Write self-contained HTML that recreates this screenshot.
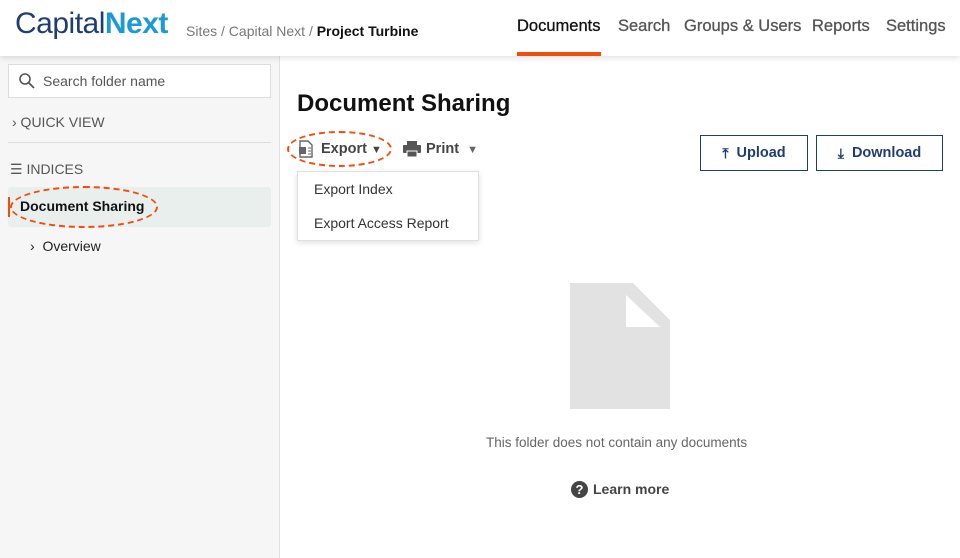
<!DOCTYPE html>
<html><head><meta charset="utf-8"><style>
*{box-sizing:border-box;margin:0;padding:0}
body{width:960px;height:558px;overflow:hidden;background:#fff;font-family:"Liberation Sans",sans-serif;position:relative}
.hdr{position:absolute;left:0;top:0;width:960px;height:56px;background:#fff;box-shadow:0 2px 6px rgba(0,0,0,.12);z-index:2}
.logo{position:absolute;left:15px;top:7px;font-size:30px;color:#1f3d73;letter-spacing:-0.5px}
.logo b{color:#1c9ad6}
.bc{position:absolute;left:186px;top:23px;font-size:14px;color:#777}
.bc b{color:#111}
.nav{position:absolute;top:17px;font-size:16.5px;color:#555;-webkit-text-stroke:0.3px}
.side{position:absolute;left:0;top:56px;width:280px;height:502px;background:#f6f6f6;border-right:1px solid #e2e2e2}
.abs{position:absolute}
.btn{position:absolute;top:135px;height:36px;border:1.5px solid #1f3d73;color:#1f3d73;font-weight:bold;font-size:14.5px;display:flex;align-items:center;justify-content:center;gap:8px}
</style></head><body>
<div class="hdr">
<div class="logo">Capital<b>Next</b></div>
<div class="bc">Sites / Capital Next / <b>Project Turbine</b></div>
<div class="nav" style="left:517px;color:#111">Documents</div>
<div class="abs" style="left:517px;top:52px;width:84px;height:4px;background:#f04e0e"></div>
<div class="nav" style="left:618px">Search</div>
<div class="nav" style="left:684px">Groups &amp; Users</div>
<div class="nav" style="left:812px">Reports</div>
<div class="nav" style="left:886px">Settings</div>
</div>
<div class="side">
<div class="abs" style="left:8px;top:8px;width:263px;height:34px;background:#fff;border:1px solid #ddd"></div>
<svg class="abs" style="left:18px;top:16px" width="18" height="18" viewBox="0 0 18 18"><circle cx="7" cy="7" r="5" fill="none" stroke="#555" stroke-width="1.6"/><path d="M11 11l5 5" stroke="#555" stroke-width="1.8"/></svg>
<div class="abs" style="left:43px;top:17px;font-size:14px;color:#555">Search folder name</div>
<div class="abs" style="left:12px;top:58px;font-size:14px;color:#555">› QUICK VIEW</div>
<div class="abs" style="left:8px;top:86px;width:263px;height:1px;background:#ddd"></div>
<div class="abs" style="left:10px;top:105px;font-size:14px;color:#555">☰ INDICES</div>
<div class="abs" style="left:8px;top:131px;width:263px;height:40px;background:#e8efec;border-radius:3px"></div>
<div class="abs" style="left:8px;top:141px;width:2px;height:20px;background:#f04e0e"></div>
<div class="abs" style="left:20px;top:142px;font-size:14px;font-weight:bold;color:#111">Document Sharing</div>
<div class="abs" style="left:10px;top:130px;width:148px;height:42px;border:2px dashed #f04e0e;border-radius:50%"></div>
<div class="abs" style="left:30px;top:182px;font-size:14px;color:#222">›&nbsp; Overview</div>
</div>
<div class="abs" style="left:297px;top:90px;font-size:24px;font-weight:bold;color:#111">Document Sharing</div>
<svg class="abs" style="left:298px;top:140px" width="16" height="18" viewBox="0 0 16 18"><path d="M2 1h8l4 4v12H2z" fill="none" stroke="#666" stroke-width="1.4"/><rect x="1" y="7" width="7" height="7" fill="#666"/><path d="M10 8h3M10 11h3M10 14h3" stroke="#666"/></svg>
<div class="abs" style="left:321px;top:141px;font-size:14.5px;font-weight:bold;color:#444">Export <span style="font-size:11px">▼</span></div>
<div class="abs" style="left:287px;top:131px;width:105px;height:36px;border:2px dashed #f04e0e;border-radius:50%"></div>
<svg class="abs" style="left:403px;top:141px" width="18" height="16" viewBox="0 0 18 16"><rect x="4" y="0" width="10" height="4" fill="#555"/><rect x="0" y="4" width="18" height="8" rx="1" fill="#555"/><rect x="4" y="10" width="10" height="6" fill="#555" stroke="#fff" stroke-width="1"/></svg>
<div class="abs" style="left:426px;top:141px;font-size:14.5px;font-weight:bold;color:#444">Print&nbsp; <span style="color:#666;font-size:11px">▼</span></div>
<div class="abs" style="left:297px;top:171px;width:182px;height:70px;background:#fff;border:1px solid #e0e0e0;box-shadow:0 2px 6px rgba(0,0,0,.12)"></div>
<div class="abs" style="left:314px;top:181px;font-size:14px;color:#333">Export Index</div>
<div class="abs" style="left:314px;top:215px;font-size:14px;color:#333">Export Access Report</div>
<div class="btn" style="left:700px;width:108px"><span style="font-size:14px">⤒</span>Upload</div>
<div class="btn" style="left:816px;width:127px"><span style="font-size:14px">⤓</span>Download</div>
<svg class="abs" style="left:570px;top:283px" width="100" height="126" viewBox="0 0 100 126"><path d="M0 0H63L100 37V126H0z" fill="#e2e2e2"/><path d="M56 12V44H90z" fill="#fff"/></svg>
<div class="abs" style="left:486px;top:435px;font-size:13.5px;color:#666">This folder does not contain any documents</div>
<div class="abs" style="left:571px;top:481px;width:17px;height:17px;border-radius:50%;background:#444;color:#fff;font-size:13px;font-weight:bold;text-align:center;line-height:17px">?</div>
<div class="abs" style="left:593px;top:481px;font-size:14px;font-weight:bold;color:#444">Learn more</div>
</body></html>
